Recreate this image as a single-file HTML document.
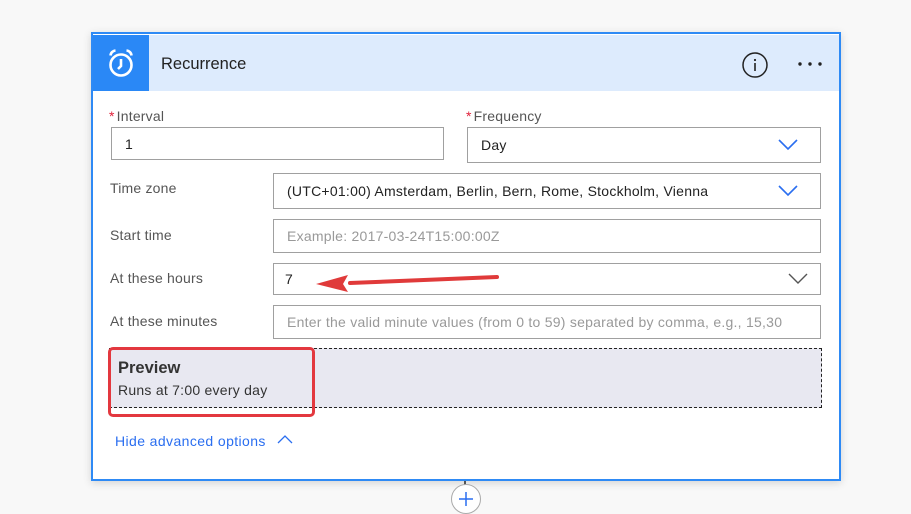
<!DOCTYPE html>
<html><head><meta charset="utf-8"><style>
*{margin:0;padding:0;box-sizing:border-box}
body{width:911px;height:509px;background:#f8f8f8;font-family:"Liberation Sans",sans-serif;position:relative;overflow:hidden;color:#333}
.card{position:absolute;left:91px;top:32px;width:750px;height:449px;background:#fff;border:2px solid #2e8af5;box-shadow:0 2px 8px rgba(0,0,0,.15)}
.hdr{position:absolute;left:0;top:1px;width:746px;height:56px;background:#ddebfd}
.ico{position:absolute;left:0;top:0;width:56px;height:56px;background:#2a88f6}
.title{position:absolute;left:68px;top:20px;font-size:16.5px;color:#222}
.lbl{position:absolute;font-size:14px;color:#555;letter-spacing:.2px}
.req{color:#e0203a;margin-right:2px}
.in{position:absolute;border:1px solid #a0a0a0;background:#fff;font-size:14px;letter-spacing:.25px;color:#222;padding-left:13px;display:flex;align-items:center}
.ph{color:#999}
.chev{position:absolute;right:22px;top:50%;margin-top:-6px}
</style></head><body>
<div class="card">
 <div class="hdr">
  <div class="ico"><svg width="56" height="56" viewBox="0 0 56 56"><g fill="none" stroke="#fff" stroke-width="2.6"><circle cx="28" cy="30" r="10.5"/><path d="M28 24v7l-3 3"/><path d="M17.5 20.5a5.5 5.5 0 0 1 5-5"/><path d="M38.5 20.5a5.5 5.5 0 0 0-5-5"/></g></svg></div>
  <div class="title">Recurrence</div>
  <svg style="position:absolute;left:648px;top:17px" width="28" height="28"><circle cx="14" cy="13" r="12" fill="none" stroke="#222" stroke-width="1.5"/><rect x="13.2" y="11" width="1.6" height="8" fill="#222"/><circle cx="14" cy="8" r="1.1" fill="#222"/></svg>
  <svg style="position:absolute;left:704px;top:26px" width="30" height="6"><circle cx="3" cy="3" r="1.7" fill="#222"/><circle cx="13" cy="3" r="1.7" fill="#222"/><circle cx="23" cy="3" r="1.7" fill="#222"/></svg>
 </div>
</div>
<div class="lbl" style="left:109px;top:108px"><span class="req">*</span>Interval</div>
<div class="in" style="left:111px;top:127px;width:333px;height:33px">1</div>
<div class="lbl" style="left:466px;top:108px"><span class="req">*</span>Frequency</div>
<div class="in" style="left:467px;top:127px;width:354px;height:36px">Day<svg class="chev" width="20" height="12"><path d="M1 1l9 9 9-9" fill="none" stroke="#2a6ef0" stroke-width="1.6"/></svg></div>
<div class="lbl" style="left:110px;top:180px">Time zone</div>
<div class="in" style="left:273px;top:173px;width:548px;height:36px">(UTC+01:00) Amsterdam, Berlin, Bern, Rome, Stockholm, Vienna<svg class="chev" width="20" height="12"><path d="M1 1l9 9 9-9" fill="none" stroke="#2a6ef0" stroke-width="1.6"/></svg></div>
<div class="lbl" style="left:110px;top:227px">Start time</div>
<div class="in" style="left:273px;top:219px;width:548px;height:34px"><span class="ph">Example: 2017-03-24T15:00:00Z</span></div>
<div class="lbl" style="left:110px;top:270px">At these hours</div>
<div class="in" style="left:273px;top:263px;width:548px;height:32px;padding-left:11px">7<svg class="chev" width="20" height="12" style="right:12px"><path d="M1 1l9 9 9-9" fill="none" stroke="#555" stroke-width="1.4"/></svg></div>
<svg style="position:absolute;left:310px;top:270px" width="195" height="25"><path d="M40 13L187 7" stroke="#e03a3a" stroke-width="4" stroke-linecap="round"/><path d="M6 14L38 5L33 14L38 22Z" fill="#e03a3a"/></svg>
<div class="lbl" style="left:110px;top:313px">At these minutes</div>
<div class="in" style="left:273px;top:305px;width:548px;height:34px"><span class="ph">Enter the valid minute values (from 0 to 59) separated by comma, e.g., 15,30</span></div>
<div style="position:absolute;left:109px;top:348px;width:713px;height:60px;background:#e8e8f1;border:1px dashed #222"></div>
<div style="position:absolute;left:108px;top:347px;width:207px;height:70px;border:3px solid #e3383f;border-radius:5px"></div>
<div style="position:absolute;left:118px;top:359px;font-size:16.5px;font-weight:bold;color:#333">Preview</div>
<div style="position:absolute;left:118px;top:382px;font-size:14px;letter-spacing:.25px;color:#333">Runs at 7:00 every day</div>
<div style="position:absolute;left:115px;top:433px;font-size:14px;letter-spacing:.4px;color:#2a6ef0">Hide advanced options</div>
<svg style="position:absolute;left:277px;top:434px" width="16" height="10"><path d="M1 9l7-7 7 7" fill="none" stroke="#2a6ef0" stroke-width="1.3"/></svg>
<div style="position:absolute;left:464px;top:481px;width:2px;height:6px;background:#555"></div>
<div style="position:absolute;left:451px;top:484px;width:30px;height:30px;border-radius:50%;background:#fff;border:1px solid #aaa"></div>
<svg style="position:absolute;left:457px;top:490px" width="18" height="18"><path d="M9 2v14M2 9h14" stroke="#2a6ef0" stroke-width="1.5"/></svg>
</body></html>
